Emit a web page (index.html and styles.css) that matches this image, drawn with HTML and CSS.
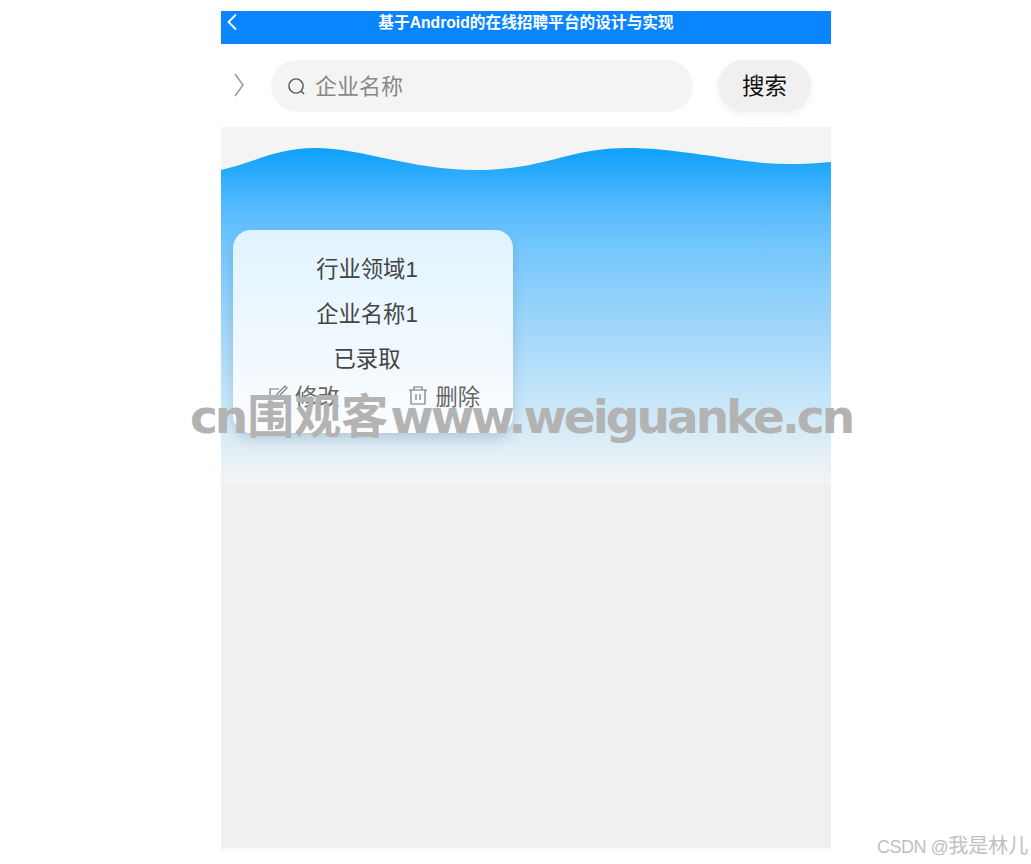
FILE: index.html
```html
<!DOCTYPE html>
<html lang="zh">
<head>
<meta charset="utf-8">
<title>基于Android的在线招聘平台的设计与实现</title>
<link rel="stylesheet" href="styles.css">
</head>
<body>
<main class="phone">
  <header class="topbar">
    <svg class="back" viewBox="0 0 12 18"><path d="M10 1.500 2.500 9l7.500 7.500"/></svg>
    <h1 class="title">基于Android的在线招聘平台的设计与实现</h1>
  </header>
  <section class="searchbar">
    <svg class="chevron" viewBox="0 0 12 26"><path d="M2 2l8 11-8 11"/></svg>
    <div class="field">
      <svg class="lens" viewBox="0 0 20 20"><circle cx="9.500" cy="9.500" r="7.500"/><path d="M15 15l3 3"/></svg>
      <span class="placeholder">企业名称</span>
    </div>
    <button class="search-btn"><span class="btn-label">搜索</span></button>
  </section>
  <section class="hero">
    <svg class="wave" viewBox="0 0 610 50" preserveAspectRatio="none"><path d="M0 0H610V35C590 37 565 38 542 36 490 30 450 21 406 21 385 21 365 24 342 30 315 37 290 43 255 43 190 43 140 21 95 21 55 21 35 35 0 43Z"/></svg>
    <article class="card">
      <p class="line">行业领域1</p>
      <p class="line">企业名称1</p>
      <p class="line">已录取</p>
      <div class="actions">
        <span class="action">
          <svg class="icon" viewBox="0 0 20 20"><path d="M17 10v8H2V4h9M8 12l1-3 8-8 2 2-8 8z"/></svg>修改
        </span>
        <span class="action">
          <svg class="icon" viewBox="0 0 20 20"><path d="M1 5h18M6 5V2h8v3M3 5v14h14V5M8 9v6M12 9v6"/></svg>删除
        </span>
      </div>
    </article>
  </section>
  <section class="empty"></section>
  <div class="strip"></div>
</main>
<div class="overlay-mark">cn<span class="overlay-cjk">围观客</span>www.weiguanke.cn</div>
<div class="csdn-mark"><span class="csdn-latin">CSDN @</span>我是林儿</div>
</body>
</html>
```
FILE: styles.css
```css
* { box-sizing: border-box; }
html, body { margin: 0; height: 100%; background: #fff; overflow: hidden; }
body { padding-top: 11px; font-family: "Liberation Sans", "Noto Sans CJK SC", sans-serif; position: relative; }
.phone { width: 610px; margin-left: 221px; }
.topbar { height: 33px; background: #0a85ff; display: flex; justify-content: center; padding-top: 2px; position: relative; }
.title { margin: 0; color: #fff; font-size: 15.700px; line-height: 19px; font-weight: 700; }
.back { position: absolute; left: 5px; top: 2px; width: 12px; height: 18px; fill: none; stroke: #fff; stroke-width: 1.800; }
.searchbar { height: 83px; background: #fff; display: flex; align-items: flex-start; padding-top: 16px; padding-left: 12px; }
.chevron { width: 12px; height: 26px; margin-top: 12px; fill: none; stroke: #999; stroke-width: 1.500; }
.field { width: 422px; height: 52px; margin-left: 26px; border-radius: 26px; background: #f4f4f4; display: flex; align-items: center; padding-left: 16px; }
.lens { width: 19px; height: 19px; fill: none; stroke: #555; stroke-width: 1.500; }
.placeholder { margin: -4px 0 0 9px; font-size: 22px; color: #888; }
.search-btn { width: 93px; height: 52px; margin-left: 25px; border: 0; border-radius: 26px; background: #f0f0f0; font: inherit; font-size: 22.500px; color: #111; box-shadow: 0 3px 8px rgba(0,0,0,.05); padding: 0 0 4px; }
.hero { height: 358px; padding: 103px 0 0 12px; position: relative; background: linear-gradient(180deg, #12a2fa 25px, #5abcfe 85px, #77c8fd 125px, #a5d8fa 210px, #c4e5f9 270px, #f4f4f4 358px); }
.wave { position: absolute; left: 0; top: 0; width: 100%; height: 50px; fill: #f4f4f4; }
.card { position: relative; width: 280px; height: 203px; padding: 17px 12px 0 0; border-radius: 18px; background: linear-gradient(180deg, #e1f3fe, #fbfdff); box-shadow: 0 6px 12px rgba(60,90,120,.22); text-align: center; color: #444; font-size: 22.300px; }
.line { margin: 0; height: 45px; line-height: 45px; }
.actions { display: flex; justify-content: space-between; margin: -5px 0 0 35px; padding-right: 21px; height: 36px; align-items: center; color: #666; }
.action { display: flex; align-items: center; gap: 7px; }
.icon { width: 20px; height: 20px; fill: none; stroke: #777; stroke-width: 1.200; }
.empty { height: 363px; background: #f0f0f0; }
.strip { height: 3px; background: #f7f9fd; }
.overlay-mark { position: absolute; left: 190px; top: 388px; width: 660px; white-space: nowrap; font-family: "DejaVu Sans", "Noto Sans CJK SC", sans-serif; font-weight: 700; font-size: 47px; line-height: 58px; letter-spacing: -3px; color: #b3b3b3; }
.overlay-cjk { letter-spacing: 0; margin: 0 2px 0 2px; }
.csdn-mark { position: absolute; left: 877px; top: 835px; font-size: 20px; line-height: 22px; color: #c0c0c0; white-space: nowrap; }
.csdn-latin { font-size: 18px; letter-spacing: -.5px; }
```
